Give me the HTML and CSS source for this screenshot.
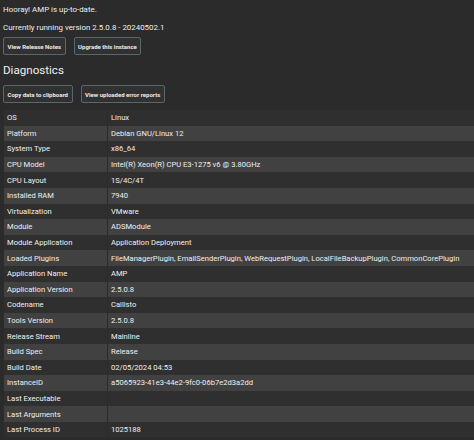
FILE: index.html
```html
<!DOCTYPE html>
<html>
<head>
<meta charset="utf-8">
<link rel="stylesheet" href="styles.css">
</head>
<body>
<div class="page">
  <p class="line first">Hooray! AMP is up-to-date.</p>
  <p class="line second">Currently running version 2.5.0.8 - 20240502.1</p>
  <div class="buttons">
    <button class="btn">View Release Notes</button>
    <button class="btn">Upgrade this instance</button>
  </div>
  <h2 class="title">Diagnostics</h2>
  <div class="buttons">
    <button class="btn">Copy data to clipboard</button>
    <button class="btn">View uploaded error reports</button>
  </div>
  <table class="diag">
    <tr><td>OS</td><td>Linux</td></tr>
    <tr><td>Platform</td><td>Debian GNU/Linux 12</td></tr>
    <tr><td>System Type</td><td>x86_64</td></tr>
    <tr><td>CPU Model</td><td>Intel(R) Xeon(R) CPU E3-1275 v6 @ 3.80GHz</td></tr>
    <tr><td>CPU Layout</td><td>1S/4C/4T</td></tr>
    <tr><td>Installed RAM</td><td>7940</td></tr>
    <tr><td>Virtualization</td><td>VMware</td></tr>
    <tr><td>Module</td><td>ADSModule</td></tr>
    <tr><td>Module Application</td><td>Application Deployment</td></tr>
    <tr><td>Loaded Plugins</td><td>FileManagerPlugin, EmailSenderPlugin, WebRequestPlugin, LocalFileBackupPlugin, CommonCorePlugin</td></tr>
    <tr><td>Application Name</td><td>AMP</td></tr>
    <tr><td>Application Version</td><td>2.5.0.8</td></tr>
    <tr><td>Codename</td><td>Callisto</td></tr>
    <tr><td>Tools Version</td><td>2.5.0.8</td></tr>
    <tr><td>Release Stream</td><td>Mainline</td></tr>
    <tr><td>Build Spec</td><td>Release</td></tr>
    <tr><td>Build Date</td><td>02/05/2024 04:53</td></tr>
    <tr><td>InstanceID</td><td>a5065923-41e3-44e2-9fc0-06b7e2d3a2dd</td></tr>
    <tr><td>Last Executable</td><td></td></tr>
    <tr><td>Last Arguments</td><td></td></tr>
    <tr><td>Last Process ID</td><td>1025188</td></tr>
  </table>
</div>
</body>
</html>
```
FILE: styles.css
```css
html, body {
  margin: 0;
  padding: 0;
  background: #2b2b2b;
  color: #efefef;
  font-family: Roboto, "Liberation Sans", sans-serif;
}
.page {
  padding: 5px 0 0 3px;
}
.line {
  margin: 0;
  font-size: 7.9px;
  line-height: 10px;
}
.second {
  margin: 8px 0 4px 0;
}
.buttons {
  display: flex;
  gap: 8px;
}
.btn {
  font-family: Roboto, "Liberation Sans", sans-serif;
  font-size: 6px;
  font-weight: 700;
  color: #ececec;
  background: #313131;
  border: 1px solid #58666d;
  border-radius: 2px;
  height: 18px;
  padding: 0 3.5px;
  margin: 0;
}
.title {
  margin: 8px 0 8px 0;
  font-size: 11.6px;
  font-weight: 400;
  line-height: 14px;
}
.diag {
  margin-top: 7px;
  margin-left: 0;
  width: calc(100% + 20px);
  border-collapse: separate;
  border-spacing: 1px 0;
  font-size: 7.6px;
}
.diag td {
  height: 15.6px;
  padding: 0 0 0 3px;
  box-sizing: border-box;
  white-space: nowrap;
}
.diag td:first-child {
  width: 103px;
}
.diag tr:nth-child(odd) td {
  background: #2f2f2f;
}
.diag tr:nth-child(even) td {
  background: #414141;
}
```
